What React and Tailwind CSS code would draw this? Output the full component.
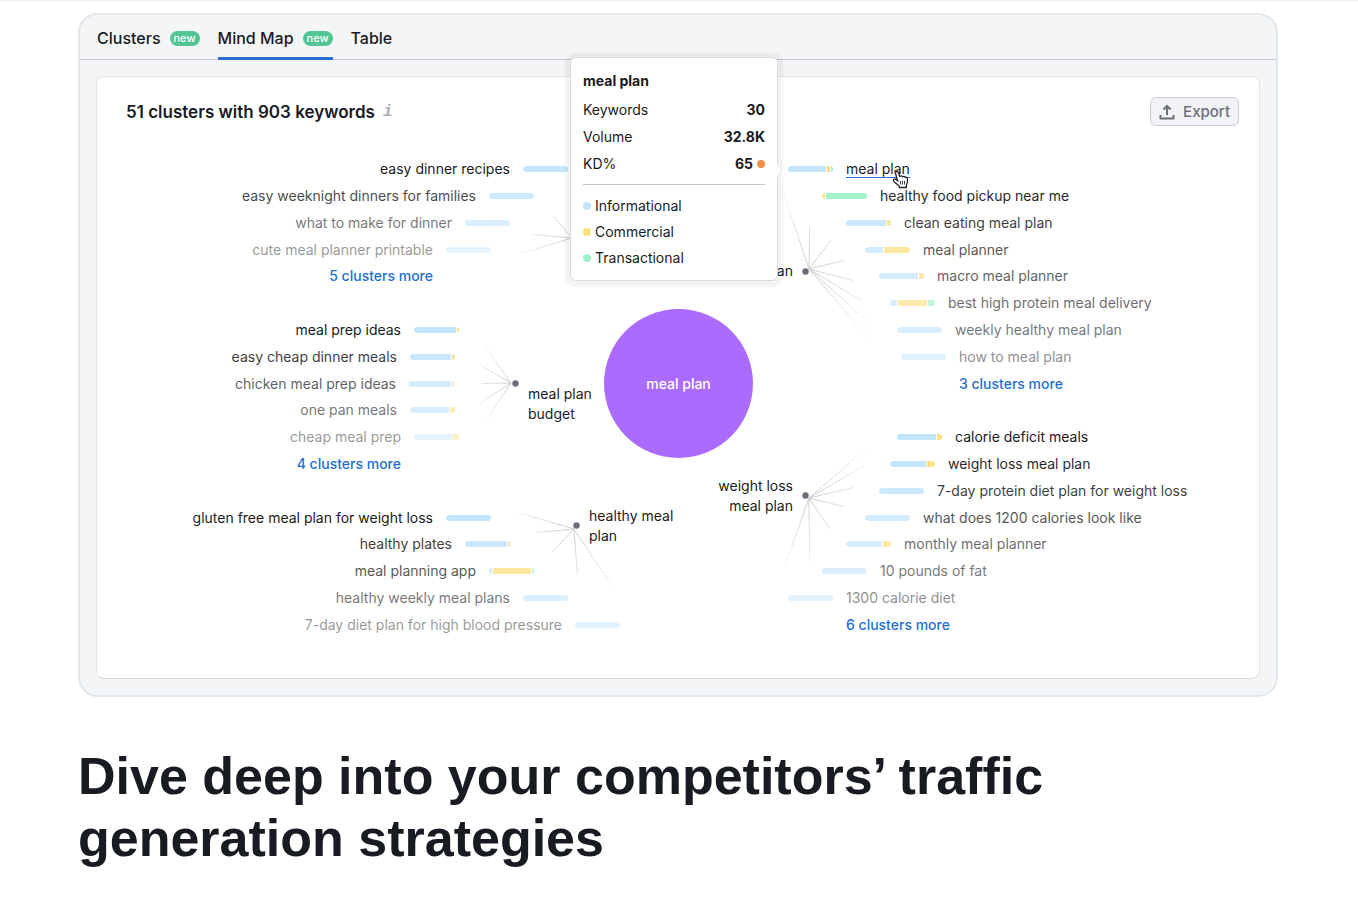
import React, { useState } from 'react'

// Canvas coordinates: x is measured from the middle of the canvas, y from its top.
const leftGroups = [
  {
    rows: [
      { x: -110, y: 29, label: 'easy dinner recipes', fade: 'opacity-100', bar: [['info', 45]] },
      { x: -144, y: 56, label: 'easy weeknight dinners for families', fade: 'opacity-80', bar: [['info', 45]] },
      { x: -168, y: 83, label: 'what to make for dinner', fade: 'opacity-60', bar: [['info', 45]] },
      { x: -187, y: 110, label: 'cute meal planner printable', fade: 'opacity-45', bar: [['info', 45]] },
    ],
    more: { x: -245, y: 136, label: '5 clusters more' },
  },
  {
    rows: [
      { x: -219, y: 190, label: 'meal prep ideas', fade: 'opacity-100', bar: [['info', 42], ['comm', 2]] },
      { x: -223, y: 217, label: 'easy cheap dinner meals', fade: 'opacity-85', bar: [['info', 41], ['comm', 3]] },
      { x: -224, y: 244, label: 'chicken meal prep ideas', fade: 'opacity-70', bar: [['info', 42], ['comm', 2]] },
      { x: -223, y: 270, label: 'one pan meals', fade: 'opacity-60', bar: [['info', 39], ['comm', 5]] },
      { x: -219, y: 297, label: 'cheap meal prep', fade: 'opacity-45', bar: [['info', 38], ['comm', 6]] },
    ],
    more: { x: -277, y: 324, label: '4 clusters more' },
  },
  {
    rows: [
      { x: -187, y: 378, label: 'gluten free meal plan for weight loss', fade: 'opacity-100', bar: [['info', 45]] },
      { x: -168, y: 404, label: 'healthy plates', fade: 'opacity-85', bar: [['info', 42], ['comm', 2]] },
      { x: -144, y: 431, label: 'meal planning app', fade: 'opacity-75', bar: [['info', 3], ['comm', 38], ['trans', 2]] },
      { x: -110, y: 458, label: 'healthy weekly meal plans', fade: 'opacity-60', bar: [['info', 45]] },
      { x: -58, y: 485, label: '7-day diet plan for high blood pressure', fade: 'opacity-45', bar: [['info', 45]] },
    ],
  },
]

const rightGroups = [
  {
    rows: [
      { x: 110, y: 29, label: 'meal plan', fade: 'opacity-100', active: true, bar: [['info', 38], ['comm', 3], ['trans', 2]] },
      { x: 144, y: 56, label: 'healthy food pickup near me', fade: 'opacity-95', bar: [['comm', 3], ['trans', 41]] },
      { x: 168, y: 83, label: 'clean eating meal plan', fade: 'opacity-85', bar: [['info', 40], ['comm', 4]] },
      { x: 187, y: 110, label: 'meal planner', fade: 'opacity-75', bar: [['info', 18], ['comm', 26]] },
      { x: 201, y: 136, label: 'macro meal planner', fade: 'opacity-70', bar: [['info', 39], ['comm', 5]] },
      { x: 212, y: 163, label: 'best high protein meal delivery', fade: 'opacity-65', bar: [['info', 7], ['comm', 29], ['trans', 7]] },
      { x: 219, y: 190, label: 'weekly healthy meal plan', fade: 'opacity-60', bar: [['info', 45]] },
      { x: 223, y: 217, label: 'how to meal plan', fade: 'opacity-50', bar: [['info', 45]] },
    ],
    more: { x: 281, y: 244, label: '3 clusters more' },
  },
  {
    rows: [
      { x: 219, y: 297, label: 'calorie deficit meals', fade: 'opacity-100', bar: [['info', 39], ['comm', 5]] },
      { x: 212, y: 324, label: 'weight loss meal plan', fade: 'opacity-95', bar: [['info', 36], ['comm', 8]] },
      { x: 201, y: 351, label: '7-day protein diet plan for weight loss', fade: 'opacity-85', bar: [['info', 45]] },
      { x: 187, y: 378, label: 'what does 1200 calories look like', fade: 'opacity-75', bar: [['info', 45]] },
      { x: 168, y: 404, label: 'monthly meal planner', fade: 'opacity-65', bar: [['info', 36], ['comm', 8]] },
      { x: 144, y: 431, label: '10 pounds of fat', fade: 'opacity-60', bar: [['info', 45]] },
      { x: 110, y: 458, label: '1300 calorie diet', fade: 'opacity-50', bar: [['info', 45]] },
    ],
    more: { x: 168, y: 485, label: '6 clusters more' },
  },
]

// Each hub: the dot, the point the rays start from, and the ends of its rays
const hubs = [
  { id: 'recipes', dot: [-100, 98], from: [-106, 98], r: 60, rays: [[-125, 76], [-145, 94], [-158, 113]] },
  { id: 'budget', dot: [-163, 243], from: [-167, 243], r: 48, rays: [[-196, 202], [-199, 224], [-197, 243], [-199, 263], [-196, 285]] },
  { id: 'healthy', dot: [-102, 385], from: [-104, 389], r: 76, rays: [[-160, 372], [-142, 392], [-126, 411], [-101, 434], [-61, 454]] },
  { id: 'plan', dot: [127, 131], from: [131, 129], r: 86, rays: [[103, 47], [131, 86], [152, 100], [165, 120], [175, 140], [183, 160], [189, 181], [190, 198]] },
  { id: 'loss', dot: [127, 355], from: [131, 358], r: 78, rays: [[189, 307], [186, 325], [175, 347], [165, 366], [151, 388], [131, 421], [106, 427]] },
]

const intents = [
  { label: 'Informational', dot: 'bg-[#c4e5fe]' },
  { label: 'Commercial', dot: 'bg-[#fcdf7d]' },
  { label: 'Transactional', dot: 'bg-[#9ef2c9]' },
]

const segColors = {
  info: 'bg-[#c4e5fe]',
  comm: 'bg-[#fce081]',
  trans: 'bg-[#9ef2c9]',
}

const at = (x) => `calc(50% + ${x}px)`

function Bar({ parts }) {
  return (
    <span className="flex h-1.5 w-[45px] shrink-0 gap-px overflow-hidden rounded-full">
      {parts.map(([kind, width]) => (
        <span key={kind} className={`h-full ${segColors[kind]}`} style={{ width }} />
      ))}
    </span>
  )
}

function Row({ row, side }) {
  const pos = side === 'left' ? { right: at(-row.x), top: row.y } : { left: at(row.x), top: row.y }
  return (
    <li
      className={`absolute flex h-5 -translate-y-1/2 items-center gap-[13px] whitespace-nowrap ${row.fade} ${
        side === 'left' ? 'flex-row-reverse' : ''
      }`}
      style={pos}
    >
      <Bar parts={row.bar} />
      <a href="#" className={row.active ? 'border-b border-[#2b6fd0] leading-4' : 'leading-5'}>
        {row.label}
      </a>
    </li>
  )
}

function Group({ group, side }) {
  const { rows, more } = group
  return (
    <ul>
      {rows.map((row) => (
        <Row key={row.label} row={row} side={side} />
      ))}
      {more && (
        <li
          className="absolute flex -translate-y-1/2 whitespace-nowrap"
          style={side === 'left' ? { right: at(-more.x), top: more.y } : { left: at(more.x), top: more.y }}
        >
          <button className="font-medium leading-5 text-[#1f6fd0]">{more.label}</button>
        </li>
      )}
    </ul>
  )
}

function Rays() {
  return (
    <svg className="absolute left-1/2 top-0 overflow-visible" width="1" height="1" fill="none" aria-hidden="true">
      <defs>
        {hubs.map((h) => (
          <radialGradient key={h.id} id={h.id} gradientUnits="userSpaceOnUse" cx={h.from[0]} cy={h.from[1]} r={h.r}>
            <stop offset="0" stopColor="#cbccd1" />
            <stop offset="1" stopColor="#cbccd1" stopOpacity="0.1" />
          </radialGradient>
        ))}
      </defs>
      {hubs.map((h) => (
        <g key={h.id}>
          {h.rays.map(([x, y]) => (
            <path key={`${x},${y}`} d={`M${h.from[0]} ${h.from[1]}L${x + 0.5} ${y + 0.5}`} stroke={`url(#${h.id})`} />
          ))}
          <circle cx={h.dot[0] + 0.5} cy={h.dot[1] + 0.5} r="3.2" fill="#6c6e79" />
        </g>
      ))}
    </svg>
  )
}

function Tooltip() {
  return (
    <div
      role="tooltip"
      className="absolute -top-[83px] z-10 w-52 rounded-md border border-[#d9dbe1] bg-white px-3 pb-[9px] pt-[11px] shadow-[0_1px_3px_5px_rgba(25,27,35,0.05)]"
      style={{ left: at(-108) }}
    >
      <h3 className="font-bold leading-6">meal plan</h3>
      <dl className="mt-[3px]">
        <div className="flex justify-between leading-[27px]">
          <dt>Keywords</dt>
          <dd className="font-bold">30</dd>
        </div>
        <div className="flex justify-between leading-[27px]">
          <dt>Volume</dt>
          <dd className="font-bold">32.8K</dd>
        </div>
        <div className="flex justify-between leading-[27px]">
          <dt>KD%</dt>
          <dd className="flex items-center gap-1 font-bold">
            65
            <span className="h-2 w-2 rounded-full bg-[#f28e44]" />
          </dd>
        </div>
      </dl>
      <ul className="mt-[7px] border-t border-[#c4c7cf] pt-2">
        {intents.map((i) => (
          <li key={i.label} className="flex items-center gap-1 leading-[26px]">
            <span className={`h-2 w-2 rounded-full ${i.dot}`} />
            {i.label}
          </li>
        ))}
      </ul>
      {/* Arrow */}
      <svg className="absolute -right-[6px] top-[106px]" width="7" height="12" viewBox="0 0 7 12" aria-hidden="true">
        <path d="M0 0L6 6L0 12Z" fill="#fff" />
        <path d="M1 0L6 6L1 12" fill="none" stroke="#eceef2" />
      </svg>
    </div>
  )
}

function HandCursor() {
  return (
    <svg className="absolute top-[29px]" style={{ left: at(214) }} width="18" height="20" viewBox="0 0 18 20" aria-hidden="true">
      <path
        d="M5.2 10.5L3.6 4.6C3 2.4 5.6 1.6 6.4 3.6L7.8 7.6C8.4 6.6 10.1 6.6 10.6 7.9C11.3 7 12.7 7.2 13.1 8.4C14 7.9 15.4 8.5 15.5 9.8C15.8 12 15.8 13.8 14.4 16V18.5H7.2V17C5.4 16 4.2 14.4 1.8 12.4C.6 11 2.4 9.4 3.8 10.4L6 12Z"
        fill="#fff"
        stroke="#22242c"
        strokeWidth="1.3"
        strokeLinejoin="round"
      />
      <path d="M8.5 12v3.5M10.5 12v3.5M12.5 12v3.5" stroke="#22242c" strokeWidth="0.9" />
    </svg>
  )
}

const tabs = [
  { label: 'Clusters', isNew: true },
  { label: 'Mind Map', isNew: true },
  { label: 'Table' },
]

function Tabs() {
  const [active, setActive] = useState('Mind Map')
  return (
    <div role="tablist" className="flex h-[45px] gap-[18px] border-b border-[#c4c7cf] pl-[17px]">
      {tabs.map((t) => (
        <button
          key={t.label}
          role="tab"
          aria-selected={active === t.label}
          onClick={() => setActive(t.label)}
          className={`-mb-px flex items-center gap-[9px] border-b-3 pt-1 text-base font-medium ${
            active === t.label ? 'border-[#2a6fd0]' : 'border-transparent'
          }`}
        >
          {t.label}
          {t.isNew && (
            <span className="rounded-full bg-[#52c594] px-1 text-[11px] font-medium leading-[15px] text-white">new</span>
          )}
        </button>
      ))}
    </div>
  )
}

export default function App() {
  return (
    <div className="min-h-screen border-t-2 border-[#f6f6f7] bg-white text-[#191b23] antialiased">
      <main className="pb-8 pl-[78px] pr-20 pt-[11px]">
        <section className="rounded-[20px] border-2 border-[#e3e8ed] bg-[#f4f5f6] font-['Inter',sans-serif] text-sm">
          <Tabs />
          <div className="mx-4 mb-4 mt-4 rounded-lg border border-[#e1e5ea] border-b-[#d5d9de] bg-white">
            <header className="flex items-center justify-between pl-[29px] pr-5 pt-5">
              <h2 className="flex items-center gap-2 text-[17px] font-semibold leading-7">
                51 clusters with 903 keywords
                <span className="font-['Liberation_Mono',monospace] text-base italic leading-7 text-[#a9abb6]">i</span>
              </h2>
              <button className="flex h-[29px] items-center gap-2 rounded-md border border-[#c9ccd4] bg-[#f2f3f6] px-2 text-[15px] font-medium text-[#6c6e79]">
                <svg width="16" height="16" viewBox="0 0 16 16" fill="none" stroke="currentColor" strokeWidth="2" aria-hidden="true">
                  <path d="M8 11V2.5M4.5 5.5L8 2L11.5 5.5" />
                  <path d="M1.5 11V14.5H14.5V11" strokeLinejoin="round" />
                </svg>
                Export
              </button>
            </header>

            {/* Mind map */}
            <div className="relative mt-[14px] h-[538px]">
              <Rays />
              {leftGroups.map((g, i) => (
                <Group key={i} group={g} side="left" />
              ))}
              {rightGroups.map((g, i) => (
                <Group key={i} group={g} side="right" />
              ))}

              <p className="absolute top-[244px] leading-5" style={{ left: at(-150) }}>
                meal plan<br />budget
              </p>
              <p className="absolute top-[366px] leading-5" style={{ left: at(-89) }}>
                healthy meal<br />plan
              </p>
              <p className="absolute top-[336px] text-right leading-5" style={{ right: at(-115) }}>
                weight loss<br />meal plan
              </p>
              <p className="absolute top-[121px] leading-5" style={{ right: at(-115) }}>
                plan
              </p>

              <div
                className="absolute top-[169px] flex size-[149px] items-center justify-center rounded-full bg-[#ab6cfe] font-medium text-white"
                style={{ left: at(-74) }}
              >
                meal plan
              </div>

              <Tooltip />
              <HandCursor />
            </div>
          </div>
        </section>

        <h1 className="mt-12 max-w-[1000px] font-['Liberation_Sans',sans-serif] text-[52px] font-bold leading-[62px]">
          Dive deep into your competitors’ traffic generation strategies
        </h1>
      </main>
    </div>
  )
}
